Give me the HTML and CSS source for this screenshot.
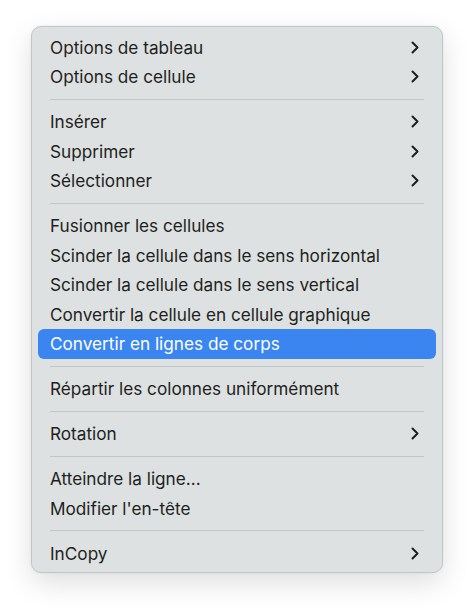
FILE: index.html
```html
<!DOCTYPE html>
<html lang="fr">
<head>
<meta charset="utf-8">
<link rel="stylesheet" href="styles.css">
</head>
<body>
<div class="menu">
  <div class="item"><span>Options de tableau</span><svg class="chev" viewBox="0 0 8 13"><path d="M1.5 1.5 L6.5 6.5 L1.5 11.5"/></svg></div>
  <div class="item"><span>Options de cellule</span><svg class="chev" viewBox="0 0 8 13"><path d="M1.5 1.5 L6.5 6.5 L1.5 11.5"/></svg></div>
  <div class="sep"></div>
  <div class="item"><span>Insérer</span><svg class="chev" viewBox="0 0 8 13"><path d="M1.5 1.5 L6.5 6.5 L1.5 11.5"/></svg></div>
  <div class="item"><span>Supprimer</span><svg class="chev" viewBox="0 0 8 13"><path d="M1.5 1.5 L6.5 6.5 L1.5 11.5"/></svg></div>
  <div class="item"><span>Sélectionner</span><svg class="chev" viewBox="0 0 8 13"><path d="M1.5 1.5 L6.5 6.5 L1.5 11.5"/></svg></div>
  <div class="sep"></div>
  <div class="item"><span>Fusionner les cellules</span></div>
  <div class="item"><span>Scinder la cellule dans le sens horizontal</span></div>
  <div class="item"><span>Scinder la cellule dans le sens vertical</span></div>
  <div class="item"><span>Convertir la cellule en cellule graphique</span></div>
  <div class="item active"><span>Convertir en lignes de corps</span></div>
  <div class="sep"></div>
  <div class="item"><span>Répartir les colonnes uniformément</span></div>
  <div class="sep"></div>
  <div class="item"><span>Rotation</span><svg class="chev" viewBox="0 0 8 13"><path d="M1.5 1.5 L6.5 6.5 L1.5 11.5"/></svg></div>
  <div class="sep"></div>
  <div class="item"><span>Atteindre la ligne...</span></div>
  <div class="item"><span>Modifier l'en-tête</span></div>
  <div class="sep"></div>
  <div class="item"><span>InCopy</span><svg class="chev" viewBox="0 0 8 13"><path d="M1.5 1.5 L6.5 6.5 L1.5 11.5"/></svg></div>
</div>
</body>
</html>
```
FILE: styles.css
```css
html, body {
  margin: 0;
  padding: 0;
  background: #ffffff;
}
body {
  padding: 26px 0 40px 31px;
  font-family: Inter, "Liberation Sans", Arial, sans-serif;
}
.menu {
  box-sizing: border-box;
  width: 412px;
  height: 547px;
  background: #dee1e2;
  border: 1px solid #c3c6c8;
  border-radius: 10px;
  padding: 5.5px 6px 0 6px;
  box-shadow: 0 10px 28px rgba(0, 0, 0, 0.13), 0 0 3px rgba(0, 0, 0, 0.06);
  display: flex;
  flex-direction: column;
}
.item {
  height: 29.5px;
  display: flex;
  align-items: center;
  justify-content: space-between;
  padding: 0 17px 0 12px;
  font-size: 17.2px;
  color: #1e1f21;
  border-radius: 6px;
  flex-shrink: 0;
}
.item.active {
  background: #3a85f0;
  color: #ffffff;
  height: 30px;
}
.chev {
  width: 8px;
  height: 13px;
  fill: none;
  stroke: #1e1f21;
  stroke-width: 2;
  stroke-linecap: round;
  stroke-linejoin: round;
}
.sep {
  height: 15.4px;
  display: flex;
  align-items: center;
  padding: 0 12px;
  flex-shrink: 0;
}
.sep::before {
  content: "";
  display: block;
  width: 100%;
  height: 1px;
  background: #c3c6c8;
}
```
